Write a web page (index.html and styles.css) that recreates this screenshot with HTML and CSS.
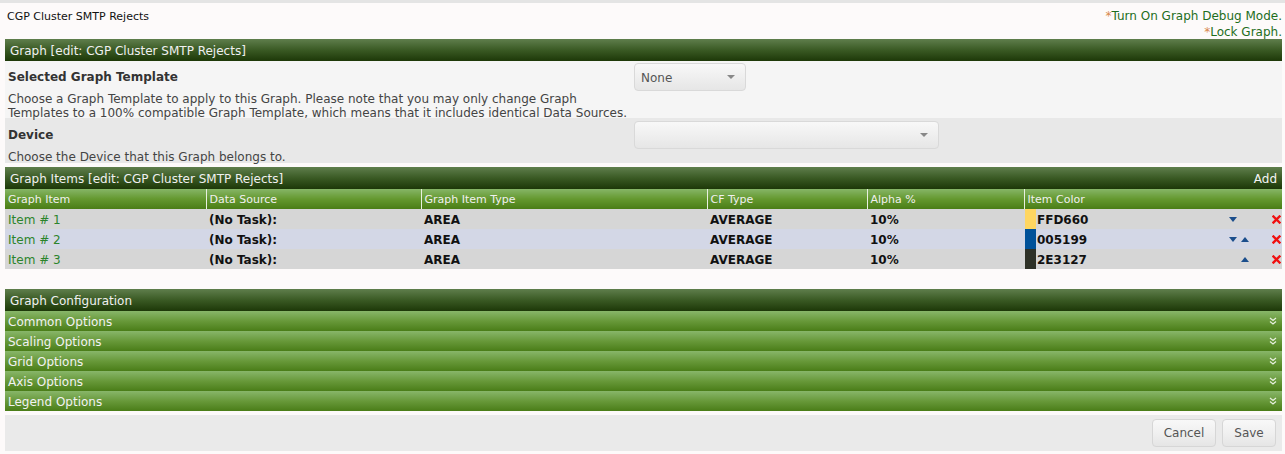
FILE: index.html
```html
<!DOCTYPE html>
<html>
<head>
<meta charset="utf-8">
<link rel="stylesheet" href="styles.css">
</head>
<body>
<div class="topline"></div>
<div class="page">
  <div class="titlebar">
    <div class="pagetitle">CGP Cluster SMTP Rejects</div>
    <div class="links">
      <div><span class="ast">*</span><a href="#">Turn On Graph Debug Mode.</a></div>
      <div><span class="ast">*</span><a href="#">Lock Graph.</a></div>
    </div>
  </div>

  <div class="panel">
    <div class="hdr">Graph [edit: CGP Cluster SMTP Rejects]</div>
    <div class="frow odd">
      <div class="fdesc">
        <div class="flabel">Selected Graph Template</div>
        <div class="ftext">Choose a Graph Template to apply to this Graph. Please note that you may only change Graph Templates to a 100% compatible Graph Template, which means that it includes identical Data Sources.</div>
      </div>
      <div class="fctl"><div class="sel sel-small"><span>None</span><i class="caret"></i></div></div>
    </div>
    <div class="frow even">
      <div class="fdesc">
        <div class="flabel">Device</div>
        <div class="ftext">Choose the Device that this Graph belongs to.</div>
      </div>
      <div class="fctl"><div class="sel sel-wide"><span></span><i class="caret"></i></div></div>
    </div>
  </div>

  <div class="panel items">
    <div class="hdr hdr-split"><span>Graph Items [edit: CGP Cluster SMTP Rejects]</span><a href="#" class="add">Add</a></div>
    <table class="itbl">
      <colgroup>
        <col class="w1"><col class="w2"><col class="w3"><col class="w4"><col class="w5"><col class="w6"><col class="w7"><col class="w8">
      </colgroup>
      <thead>
        <tr>
          <th class="c1">Graph Item</th>
          <th>Data Source</th>
          <th>Graph Item Type</th>
          <th>CF Type</th>
          <th>Alpha %</th>
          <th colspan="3">Item Color</th>
        </tr>
      </thead>
      <tbody>
        <tr class="r-a">
          <td><a href="#">Item # 1</a></td>
          <td class="b">(No Task):</td>
          <td class="b">AREA</td>
          <td class="b">AVERAGE</td>
          <td class="b">10%</td>
          <td class="b colcell"><div class="cc"><span class="sw" style="background:#FFD660"></span><span class="hex">FFD660</span></div></td>
          <td class="arrows"><span class="down"></span><span class="blank"></span></td>
          <td class="del"><svg class="x" viewBox="0 0 9 9" width="9" height="9"><path d="M1.5 1.5 L7.5 7.5 M7.5 1.5 L1.5 7.5" stroke="#f01010" stroke-width="2.4" stroke-linecap="square"/></svg></td>
        </tr>
        <tr class="r-b">
          <td><a href="#">Item # 2</a></td>
          <td class="b">(No Task):</td>
          <td class="b">AREA</td>
          <td class="b">AVERAGE</td>
          <td class="b">10%</td>
          <td class="b colcell"><div class="cc"><span class="sw" style="background:#005199"></span><span class="hex">005199</span></div></td>
          <td class="arrows"><span class="down"></span><span class="up"></span></td>
          <td class="del"><svg class="x" viewBox="0 0 9 9" width="9" height="9"><path d="M1.5 1.5 L7.5 7.5 M7.5 1.5 L1.5 7.5" stroke="#f01010" stroke-width="2.4" stroke-linecap="square"/></svg></td>
        </tr>
        <tr class="r-a">
          <td><a href="#">Item # 3</a></td>
          <td class="b">(No Task):</td>
          <td class="b">AREA</td>
          <td class="b">AVERAGE</td>
          <td class="b">10%</td>
          <td class="b colcell"><div class="cc"><span class="sw" style="background:#2E3127"></span><span class="hex">2E3127</span></div></td>
          <td class="arrows"><span class="blank"></span><span class="up"></span></td>
          <td class="del"><svg class="x" viewBox="0 0 9 9" width="9" height="9"><path d="M1.5 1.5 L7.5 7.5 M7.5 1.5 L1.5 7.5" stroke="#f01010" stroke-width="2.4" stroke-linecap="square"/></svg></td>
        </tr>
      </tbody>
    </table>
  </div>

  <div class="panel config">
    <div class="hdr">Graph Configuration</div>
    <div class="opt"><span>Common Options</span><svg class="chev" viewBox="0 0 8 8" width="8" height="8"><path d="M1 1 L4 3.5 L7 1 M1 4.5 L4 7 L7 4.5" fill="none" stroke="#e8f0e0" stroke-width="1.2"/></svg></div>
    <div class="opt"><span>Scaling Options</span><svg class="chev" viewBox="0 0 8 8" width="8" height="8"><path d="M1 1 L4 3.5 L7 1 M1 4.5 L4 7 L7 4.5" fill="none" stroke="#e8f0e0" stroke-width="1.2"/></svg></div>
    <div class="opt"><span>Grid Options</span><svg class="chev" viewBox="0 0 8 8" width="8" height="8"><path d="M1 1 L4 3.5 L7 1 M1 4.5 L4 7 L7 4.5" fill="none" stroke="#e8f0e0" stroke-width="1.2"/></svg></div>
    <div class="opt"><span>Axis Options</span><svg class="chev" viewBox="0 0 8 8" width="8" height="8"><path d="M1 1 L4 3.5 L7 1 M1 4.5 L4 7 L7 4.5" fill="none" stroke="#e8f0e0" stroke-width="1.2"/></svg></div>
    <div class="opt"><span>Legend Options</span><svg class="chev" viewBox="0 0 8 8" width="8" height="8"><path d="M1 1 L4 3.5 L7 1 M1 4.5 L4 7 L7 4.5" fill="none" stroke="#e8f0e0" stroke-width="1.2"/></svg></div>
  </div>

  <div class="actions">
    <button class="btn btn-cancel">Cancel</button>
    <button class="btn btn-save">Save</button>
  </div>
</div>
</body>
</html>
```
FILE: styles.css
```css
html, body {
  margin: 0;
  padding: 0;
  background: #fdfafa;
  font-family: "DejaVu Sans", Verdana, sans-serif;
  font-size: 12px;
  color: #333;
}
.topline {
  height: 3px;
  background: #e4e4e4;
}
.page {
  padding: 0 3px 0 5px;
}
.titlebar {
  display: flex;
  justify-content: space-between;
  align-items: flex-start;
  height: 36px;
}
.pagetitle {
  font-size: 11px;
  color: #111;
  padding: 7px 0 0 2px;
}
.links {
  text-align: right;
  padding-top: 5px;
  line-height: 16px;
}
.links a {
  color: #1d6e1d;
  text-decoration: none;
}
.ast {
  color: #d8884c;
}
.hdr {
  box-sizing: border-box;
  height: 22px;
  line-height: 20px;
  padding-top: 2px;
  padding-left: 5px;
  color: #f0f0f0;
  background: linear-gradient(to bottom, #5f7e4c 0%, #3a5a24 50%, #1d3808 100%);
}
.hdr-split {
  display: flex;
  justify-content: space-between;
  padding-right: 5px;
}
.hdr-split .add {
  color: #f4f4f4;
  text-decoration: none;
}
.frow {
  display: flex;
  align-items: flex-start;
}
.frow.odd {
  background: #f5f5f5;
  height: 57px;
}
.frow.even {
  background: #e8e8e8;
  height: 45px;
}
.fdesc {
  width: 626px;
  padding: 9px 0 0 3px;
  color: #444;
}
.frow.even .fdesc {
  padding-top: 10px;
}
.flabel {
  font-weight: bold;
  font-size: 12px;
  color: #333;
  margin-bottom: 8px;
}
.ftext {
  line-height: 14px;
  font-size: 12px;
}
.fctl {
  padding-top: 2px;
}
.frow.even .fctl {
  padding-top: 3px;
}
.sel {
  box-sizing: border-box;
  height: 28px;
  border: 1px solid #d9d9d9;
  border-radius: 4px;
  background: linear-gradient(to bottom, #f8f8f8 0%, #eeeeee 55%, #e6e6e6 100%);
  display: flex;
  align-items: center;
  justify-content: space-between;
  padding: 2px 10px 0 6px;
  color: #555;
}
.sel-small { width: 112px; }
.sel-wide { width: 305px; }
.caret {
  width: 0;
  height: 0;
  border-left: 4px solid transparent;
  border-right: 4px solid transparent;
  border-top: 4px solid #888;
  margin-top: -2px;
}
.items {
  margin-top: 4px;
}
.itbl {
  width: 100%;
  border-collapse: collapse;
  table-layout: fixed;
}
.w1 { width: 201px; }
.w2 { width: 215px; }
.w3 { width: 286px; }
.w4 { width: 160px; }
.w5 { width: 157px; }
.w6 { width: 200px; }
.w7 { width: 28px; }
.w8 { width: 30px; }
.itbl th {
  height: 20px;
  padding: 1px 0 0 3px;
  text-align: left;
  font-weight: normal;
  color: #f0f0f0;
  font-size: 11px;
  background: linear-gradient(to bottom, #86b567 0%, #64982f 50%, #4a7d16 100%);
  border-left: 1px solid #e8f0e0;
  white-space: nowrap;
  box-sizing: border-box;
}
.itbl th.c1 { border-left: none; }
.itbl td {
  height: 20px;
  box-sizing: border-box;
  padding: 1px 0 0 3px;
  white-space: nowrap;
  font-size: 12px;
}
.itbl td a {
  color: #2c842c;
  text-decoration: none;
}
.itbl td.b {
  font-weight: bold;
  color: #111;
}
.r-a td { background: #d6d6d6; }
.r-b td { background: #d3d7e6; }
.itbl td.colcell {
  padding: 0 0 0 1px;
}
.cc {
  display: flex;
  align-items: center;
  height: 20px;
}
.sw {
  width: 11px;
  height: 20px;
  margin-right: 1px;
  flex: none;
}
.hex {
  padding-top: 1px;
}
.itbl td.arrows {
  text-align: right;
  padding: 0 3px 0 0;
}
.down, .up, .blank {
  display: inline-block;
  width: 0;
  height: 0;
  border-left: 4.5px solid transparent;
  border-right: 4.5px solid transparent;
  margin-left: 4px;
  vertical-align: middle;
}
.down { border-top: 5px solid #1b4e8c; }
.up { border-bottom: 5px solid #1b4e8c; }
.blank { border-top: 5px solid transparent; }
.itbl td.del {
  text-align: right;
  padding: 0 1px 0 0;
}
.x {
  display: inline-block;
  vertical-align: middle;
}
.config {
  margin-top: 20px;
}
.opt {
  box-sizing: border-box;
  height: 20px;
  line-height: 18px;
  padding: 2px 5px 0 3px;
  display: flex;
  justify-content: space-between;
  align-items: center;
  color: #f2f2f2;
  background: linear-gradient(to bottom, #88b66a 0%, #68993a 50%, #4a7d18 100%);
}
.chev {
  display: block;
  margin-top: -2px;
}
.actions {
  margin-top: 4px;
  background: #eaeaea;
  height: 36px;
  display: flex;
  justify-content: flex-end;
  align-items: center;
  gap: 6px;
  padding-right: 6px;
}
.btn {
  font-family: "DejaVu Sans", Verdana, sans-serif;
  font-size: 12px;
  color: #555;
  height: 28px;
  padding: 0 10px;
  border: 1px solid #d6d6d6;
  border-radius: 4px;
  background: linear-gradient(to bottom, #f8f8f8 0%, #efefef 55%, #e5e5e5 100%);
}
.btn-cancel { width: 64px; }
.btn-save { width: 54px; }
```
